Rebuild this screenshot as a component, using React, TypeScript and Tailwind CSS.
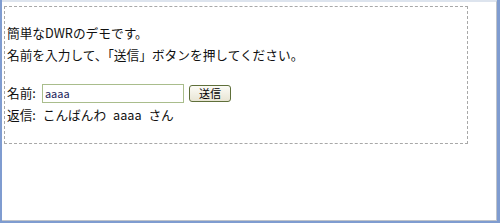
const font = { fontFamily: '"Noto Sans CJK JP", "Liberation Sans", sans-serif' }

const App = () => {
  return (
    <div className="w-[500px] h-[223px] bg-[#7f9cd0] pl-[2px] pr-[3px] pb-[2px]" style={font}>
      <div className="h-full bg-white border-t-2 border-t-[#dde4ee] border-r border-r-[#bfc3c9] border-b border-b-[#bfc3c9] pt-[4px] pl-[2px]">
        <div className="w-[464px] border border-dashed border-[#a8a8a8] pl-[2px] pt-[15px] pb-[17px] text-[12.7px] leading-[22px] text-[#111]">
          <p>
            簡単なDWRのデモです。
            <br />
            名前を入力して、「送信」ボタンを押してください。
          </p>
          <div className="mt-[16px] flex items-center h-[22px]">
            <span>名前:</span>
            <input
              type="text"
              defaultValue="aaaa"
              className="ml-[6px] w-[142px] h-[19px] border border-[#a9bd8c] px-[2px] text-[11px] text-[#1c1c5a] outline-none"
              style={font}
            />
            <button className="ml-[5px] h-[17px] w-[42px] rounded-[3px] border border-[#5f6f3a] bg-gradient-to-b from-[#fcfbf6] to-[#e8e5d4] text-[11px] leading-[15px] text-black">
              送信
            </button>
          </div>
          <div className="h-[22px] [word-spacing:4px]">返信: こんばんわ aaaa さん</div>
        </div>
      </div>
    </div>
  )
}

export default App
